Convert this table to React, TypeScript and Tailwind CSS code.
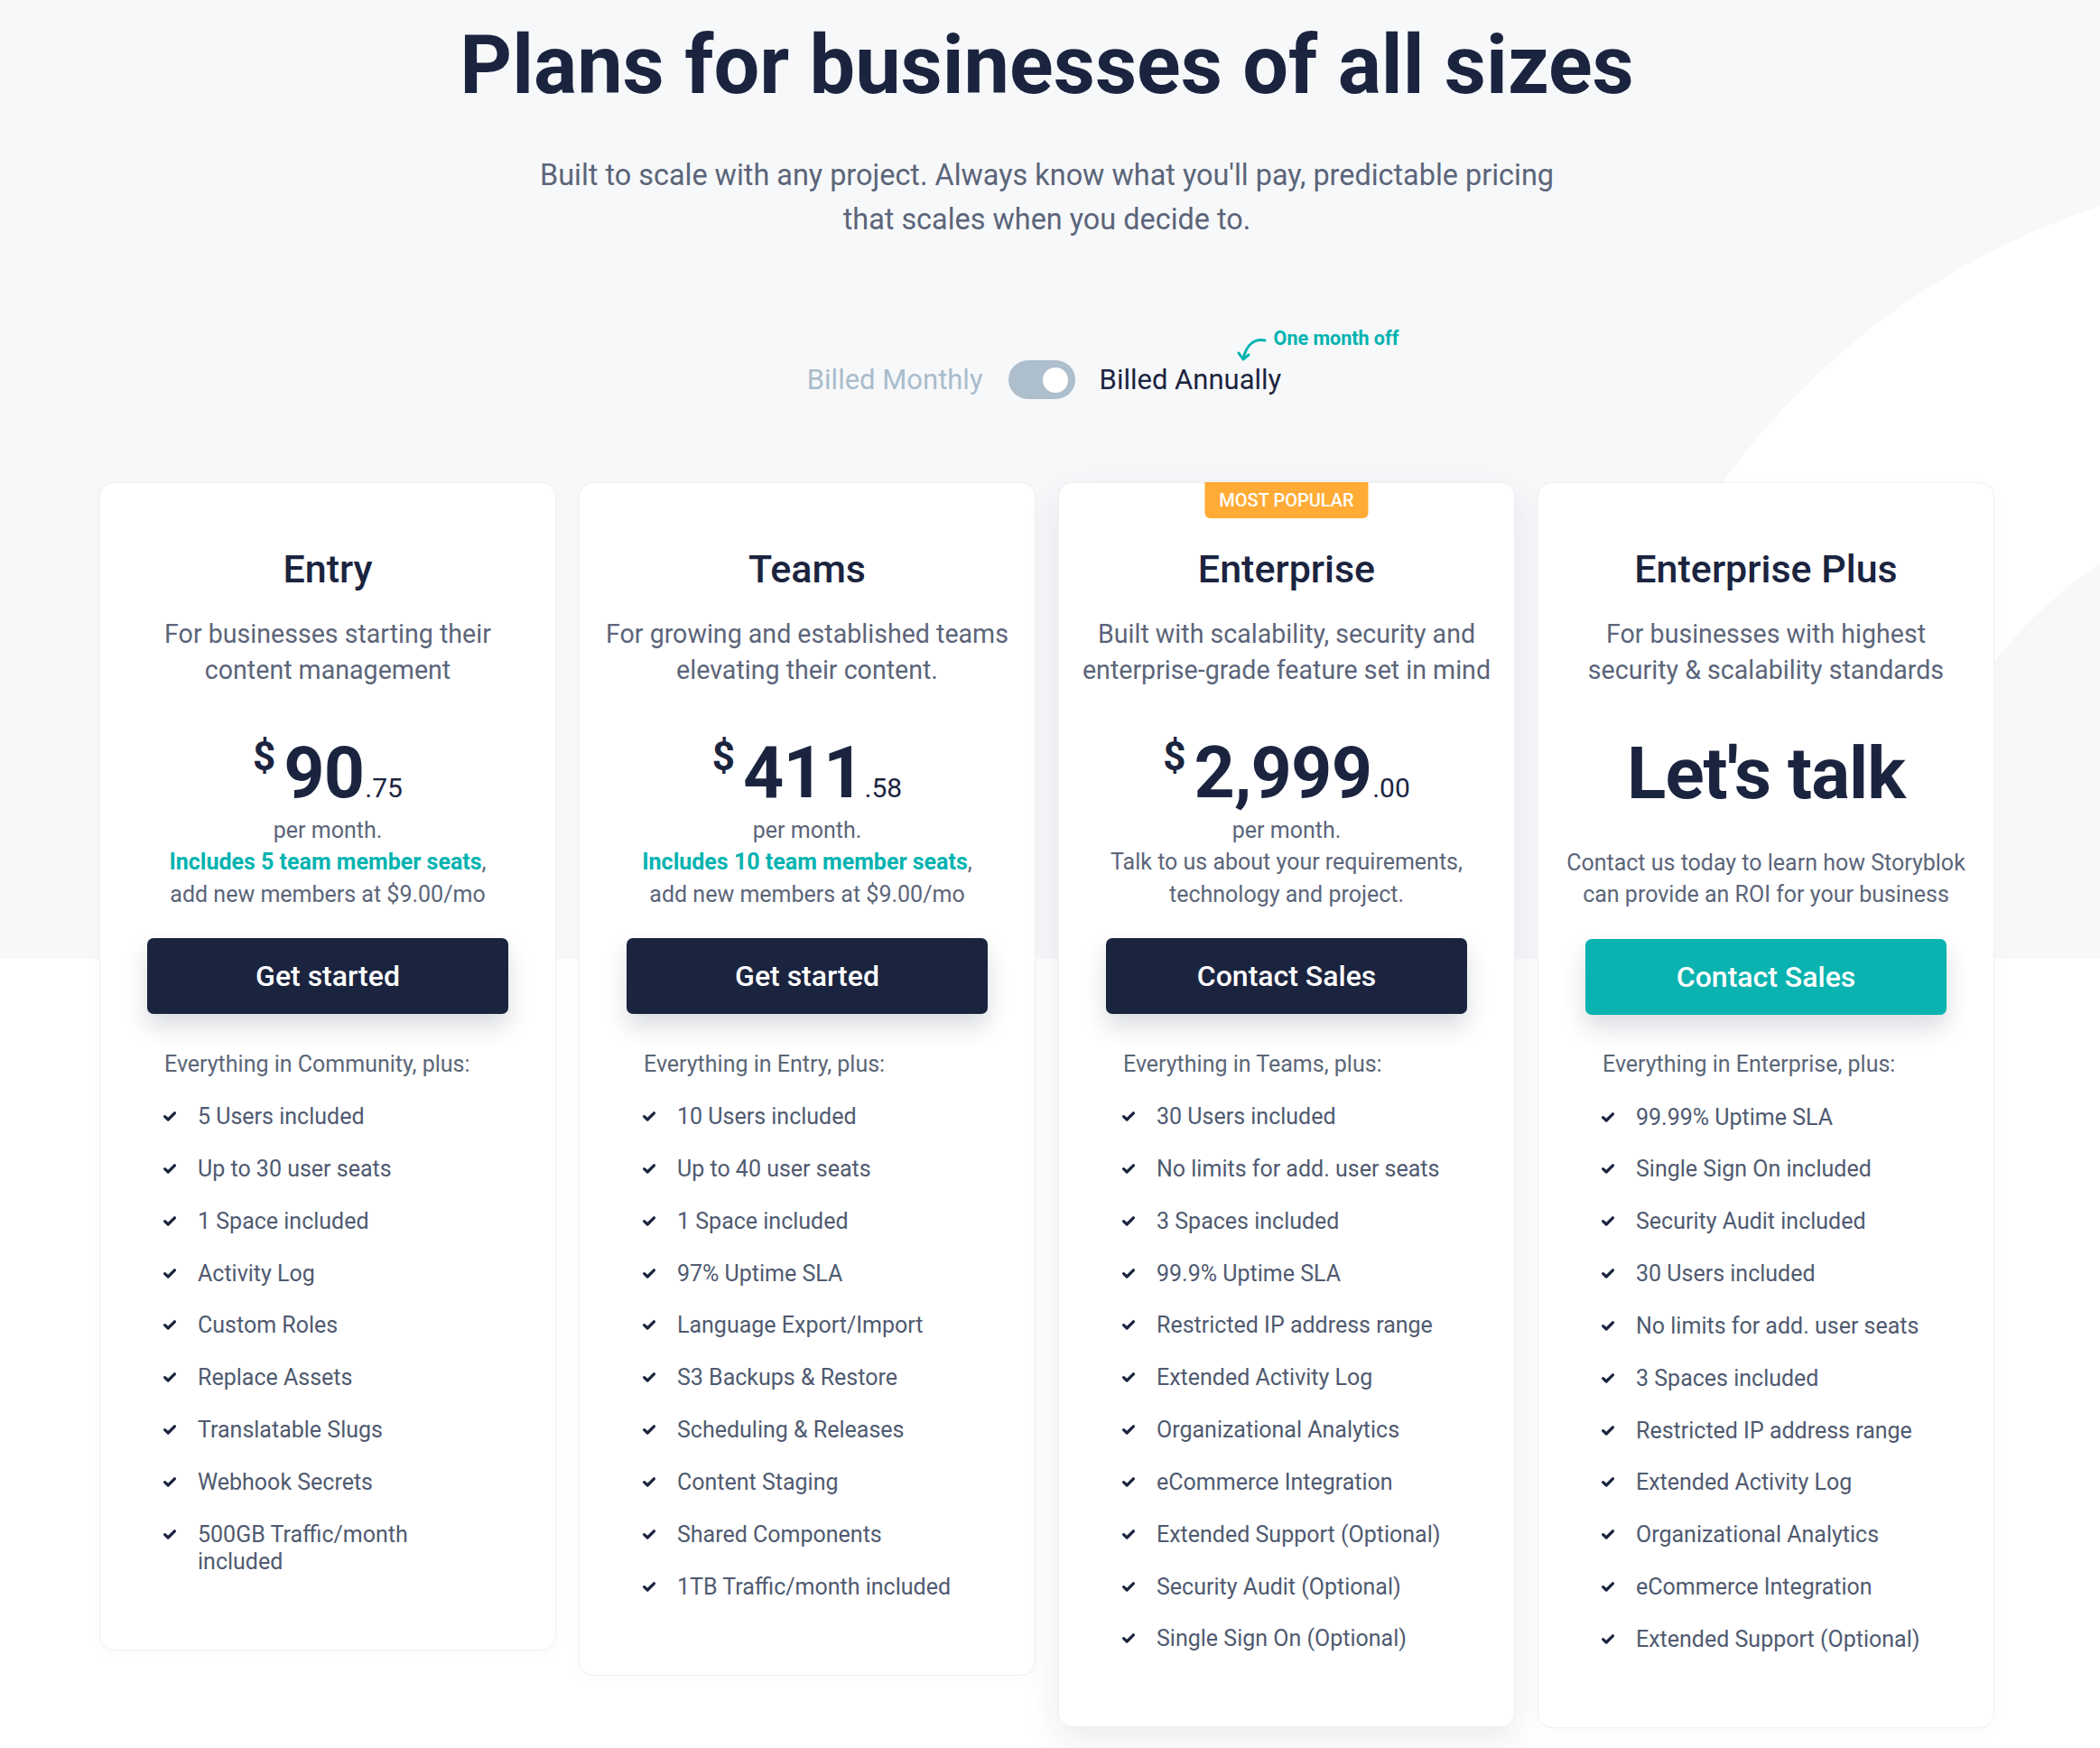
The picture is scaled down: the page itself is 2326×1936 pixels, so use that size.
import React from "react";

type Plan = {
  name: string;
  desc: [string, string];
  price?: { whole: string; cents: string };
  lines: React.ReactNode[];
  cta: string;
  ctaTeal?: boolean;
  popular?: boolean;
  intro: string;
  features: React.ReactNode[];
};

const plans: Plan[] = [
  {
    name: "Entry",
    desc: ["For businesses starting their", "content management"],
    price: { whole: "90", cents: ".75" },
    lines: [
      "per month.",
      <>
        <span className="font-bold text-[#00b3b0]">Includes 5 team member seats</span>,
      </>,
      "add new members at $9.00/mo",
    ],
    cta: "Get started",
    intro: "Everything in Community, plus:",
    features: [
      "5 Users included",
      "Up to 30 user seats",
      "1 Space included",
      "Activity Log",
      "Custom Roles",
      "Replace Assets",
      "Translatable Slugs",
      "Webhook Secrets",
      <>
        500GB Traffic/month
        <br />
        included
      </>,
    ],
  },
  {
    name: "Teams",
    desc: ["For growing and established teams", "elevating their content."],
    price: { whole: "411", cents: ".58" },
    lines: [
      "per month.",
      <>
        <span className="font-bold text-[#00b3b0]">Includes 10 team member seats</span>,
      </>,
      "add new members at $9.00/mo",
    ],
    cta: "Get started",
    intro: "Everything in Entry, plus:",
    features: [
      "10 Users included",
      "Up to 40 user seats",
      "1 Space included",
      "97% Uptime SLA",
      "Language Export/Import",
      "S3 Backups & Restore",
      "Scheduling & Releases",
      "Content Staging",
      "Shared Components",
      "1TB Traffic/month included",
    ],
  },
  {
    name: "Enterprise",
    desc: ["Built with scalability, security and", "enterprise-grade feature set in mind"],
    price: { whole: "2,999", cents: ".00" },
    lines: ["per month.", "Talk to us about your requirements,", "technology and project."],
    cta: "Contact Sales",
    popular: true,
    intro: "Everything in Teams, plus:",
    features: [
      "30 Users included",
      "No limits for add. user seats",
      "3 Spaces included",
      "99.9% Uptime SLA",
      "Restricted IP address range",
      "Extended Activity Log",
      "Organizational Analytics",
      "eCommerce Integration",
      "Extended Support (Optional)",
      "Security Audit (Optional)",
      "Single Sign On (Optional)",
    ],
  },
  {
    name: "Enterprise Plus",
    desc: ["For businesses with highest", "security & scalability standards"],
    lines: ["Contact us today to learn how Storyblok", "can provide an ROI for your business"],
    cta: "Contact Sales",
    ctaTeal: true,
    intro: "Everything in Enterprise, plus:",
    features: [
      "99.99% Uptime SLA",
      "Single Sign On included",
      "Security Audit included",
      "30 Users included",
      "No limits for add. user seats",
      "3 Spaces included",
      "Restricted IP address range",
      "Extended Activity Log",
      "Organizational Analytics",
      "eCommerce Integration",
      "Extended Support (Optional)",
    ],
  },
];

function Check() {
  return (
    <svg width="14" height="11" viewBox="0 0 14 11" className="shrink-0 mt-[9px]">
      <path d="M1.6 5.6 L5.2 9 L12.4 1.8" fill="none" stroke="#1b243f" strokeWidth="3.2" strokeLinecap="round" strokeLinejoin="round" />
    </svg>
  );
}

function Card({ plan }: { plan: Plan }) {
  return (
    <div
      className={
        "relative w-[506px] rounded-[16px] bg-white border border-[#eef0f3] pt-[70px] pb-[82px] " +
        (plan.popular
          ? "shadow-[0_14px_40px_rgba(27,36,63,0.09)]"
          : "shadow-[0_4px_16px_rgba(27,36,63,0.025)]")
      }
    >
      {plan.popular && (
        <div className="absolute left-1/2 -translate-x-1/2 top-[-1px] w-[181px] h-[40px] rounded-b-[6px] bg-[#ffab35] flex items-center justify-center text-white text-[20px] font-medium leading-none">
          MOST POPULAR
        </div>
      )}
      <h3 className="text-center text-[43px] leading-[50px] font-medium text-[#1b243f]">{plan.name}</h3>
      <p className="mt-[27px] text-center text-[28.6px] leading-[40px] text-[#5b6579] whitespace-nowrap">
        {plan.desc[0]}
        <br />
        {plan.desc[1]}
      </p>
      {plan.price ? (
        <div className="mt-[55px]">
          <div className="flex justify-center items-baseline text-[#1b243f]">
            <span className="self-start text-[44px] leading-[44px] font-bold mr-[9px] -mt-[1px]">$</span>
            <span className="text-[79px] leading-[78px] font-bold tracking-[-0.8px]">{plan.price.whole}</span>
            <span className="text-[30px] leading-[30px] ml-[1px]">{plan.price.cents}</span>
          </div>
          <div className="mt-[6.5px] text-center text-[25px] leading-[35.5px] text-[#5b6579] whitespace-nowrap">
            {plan.lines.map((l, i) => (
              <div key={i}>{l}</div>
            ))}
          </div>
        </div>
      ) : (
        <div className="mt-[55px]">
          <div className="h-[80px] flex justify-center">
            <span className="text-[80px] leading-[80px] font-bold text-[#1b243f] tracking-[-1px]">Let's talk</span>
          </div>
          <div className="mt-[40.5px] text-center text-[25px] leading-[35.5px] text-[#5b6579] whitespace-nowrap">
            {plan.lines.map((l, i) => (
              <div key={i}>{l}</div>
            ))}
          </div>
        </div>
      )}
      <div className="mt-[31px] flex justify-center">
        <button
          className={
            "w-[400px] h-[84px] rounded-[7px] text-white text-[32px] font-medium shadow-[0_14px_26px_rgba(27,36,63,0.16)] " +
            (plan.ctaTeal ? "bg-[#0ab3af]" : "bg-[#1b243f]")
          }
        >
          {plan.cta}
        </button>
      </div>
      <div className="mt-[40.5px] pl-[71px] text-[25px] leading-[30px] text-[#5b6677]">{plan.intro}</div>
      <ul className="mt-[28.5px] pl-[70px] flex flex-col gap-[27.85px]">
        {plan.features.map((f, i) => (
          <li key={i} className="flex items-start gap-[24px] text-[25px] leading-[30px] text-[#4f5a70]">
            <Check />
            <span>{f}</span>
          </li>
        ))}
      </ul>
    </div>
  );
}

export default function App() {
  return (
    <div className="relative w-[2326px] h-[1936px] overflow-hidden bg-white font-['Roboto','Noto_Sans',sans-serif]">
      <div className="absolute left-0 top-0 w-[2326px] h-[1062px] bg-[#f7f8fa] overflow-hidden">
        <svg width="2326" height="1062" className="absolute left-0 top-0">
          <circle cx="2586" cy="1022" r="655" fill="none" stroke="#ffffff" strokeWidth="360" />
        </svg>
      </div>

      <div className="relative w-[2319px] pt-[22px]">
        <h1 className="text-center text-[90px] leading-[101px] font-bold text-[#1b243f]">
          Plans for businesses of all sizes
        </h1>
        <p className="mt-[47px] text-center text-[32.4px] leading-[49px] text-[#5b6579]">
          Built to scale with any project. Always know what you'll pay, predictable pricing
          <br />
          that scales when you decide to.
        </p>

        <div className="mt-[131px] flex items-center justify-center h-[43px] -translate-x-[3px]">
          <span className="text-[31px] leading-[36px] text-[#a9bccb]">Billed Monthly</span>
          <div className="ml-[28px] w-[74px] h-[43px] rounded-full bg-[#adbecd] relative">
            <div className="absolute right-[8px] top-[7.5px] w-[28px] h-[28px] rounded-full bg-white" />
          </div>
          <span className="relative ml-[27px] text-[31px] leading-[36px] text-[#1b243f]">
            Billed Annually
            <svg width="36" height="32" viewBox="0 0 36 32" className="absolute left-[150px] top-[-31px]">
              <path d="M33 5 C 22 3, 13 9, 9 25" fill="none" stroke="#00b3b0" strokeWidth="3" strokeLinecap="round" />
              <path d="M4 19 L9 26 L15 21" fill="none" stroke="#00b3b0" strokeWidth="3" strokeLinecap="round" strokeLinejoin="round" />
            </svg>
            <span className="absolute left-[193px] top-[-40px] whitespace-nowrap text-[21.5px] leading-[24px] font-bold text-[#00b3b0]">
              One month off
            </span>
          </span>
        </div>

        <div className="mt-[92px] mx-auto w-[2099px] flex items-start gap-[25px]">
          {plans.map((p) => (
            <Card key={p.name} plan={p} />
          ))}
        </div>
      </div>
    </div>
  );
}
